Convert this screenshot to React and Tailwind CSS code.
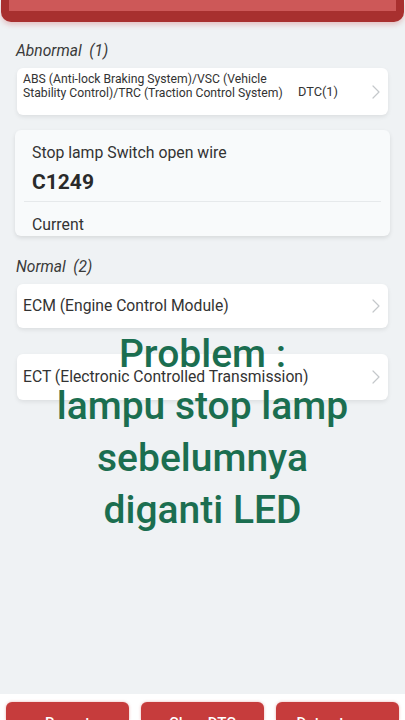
import { ChevronRight } from "lucide-react";

const font = { fontFamily: "Roboto, 'Noto Sans', sans-serif" };

function RowCard({ children, right }) {
  return (
    <div className="mx-[17px] flex items-center rounded-md bg-white shadow-[0_2px_4px_rgba(0,0,0,0.08)]">
      <div className="flex-1 pl-[6px]">{children}</div>
      {right}
      <ChevronRight className="h-[24px] w-[24px] text-[#c4c8cb]" strokeWidth={1.2} />
    </div>
  );
}

export default function App() {
  return (
    <div className="relative flex h-[720px] w-full flex-col overflow-hidden bg-[#eff2f4] text-[#333]" style={font}>
      {/* top red bar */}
      <div className="mx-[1px] h-[22px] rounded-b-[10px] bg-[#a8302f] shadow-[0_3px_5px_rgba(200,60,60,0.25)]">
        <div className="mx-[8px] h-[11px] bg-[#cd5858]" />
      </div>

      <div className="flex-1 pt-[19px]">
        <div className="px-[16px] text-[15.6px] italic leading-[20px] text-[#3a3a3a]">
          Abnormal&nbsp; (1)
        </div>
        <div className="mt-[7px]">
          <RowCard
            right={<span className="mr-[26px] whitespace-nowrap text-[12.8px] text-[#333]">DTC(1)</span>}
          >
            <div className="whitespace-nowrap pb-[15px] pt-[4px] text-[12.2px] leading-[14px] text-[#333]">
              ABS (Anti-lock Braking System)/VSC (Vehicle<br />
              Stability Control)/TRC (Traction Control System)
            </div>
          </RowCard>
        </div>

        <div className="mx-[15px] mt-[15px] h-[106px] overflow-hidden rounded-md bg-[#f8fafb] shadow-[0_2px_4px_rgba(0,0,0,0.1)]">
          <div className="px-[17px] pt-[13px] text-[15.8px] leading-[20px] text-[#333]">Stop lamp Switch open wire</div>
          <div className="px-[17px] pt-[7px] text-[21px] font-bold leading-[24px] text-[#2a2a2a]">C1249</div>
          <div className="mx-[9px] mt-[7px] border-t border-[#e6e9eb]" />
          <div className="px-[17px] pt-[13px] text-[15.8px] leading-[20px] text-[#333]">Current</div>
        </div>

        <div className="mt-[21px] px-[16px] text-[15.6px] italic leading-[20px] text-[#3a3a3a]">
          Normal&nbsp; (2)
        </div>
        <div className="mt-[7px] h-[44px]">
          <RowCard>
            <div className="flex h-[44px] items-center text-[15.7px] text-[#333]">ECM (Engine Control Module)</div>
          </RowCard>
        </div>
        <div className="mt-[26px] h-[46px]">
          <RowCard>
            <div className="flex h-[46px] items-center text-[15.7px] text-[#333]">ECT (Electronic Controlled Transmission)</div>
          </RowCard>
        </div>
      </div>

      {/* bottom buttons */}
      <div className="flex h-[26px] gap-[12px] bg-white px-[6px] pt-[8px]">
        {["Report", "Clear DTC", "Data stream"].map((t) => (
          <div
            key={t}
            className="flex-1 rounded-t-[6px] bg-[#c63c3c] pt-[12px] text-center text-[15px] font-medium leading-[18px] text-white shadow-[0_0_3px_rgba(200,60,60,0.4)]"
          >
            {t}
          </div>
        ))}
      </div>

      {/* caption overlay */}
      <div className="pointer-events-none absolute left-0 right-0 top-[328px] text-center text-[39px] font-medium leading-[52px] text-[#1b6e50]">
        Problem :<br />
        lampu stop lamp<br />
        sebelumnya<br />
        diganti LED
      </div>
    </div>
  );
}
